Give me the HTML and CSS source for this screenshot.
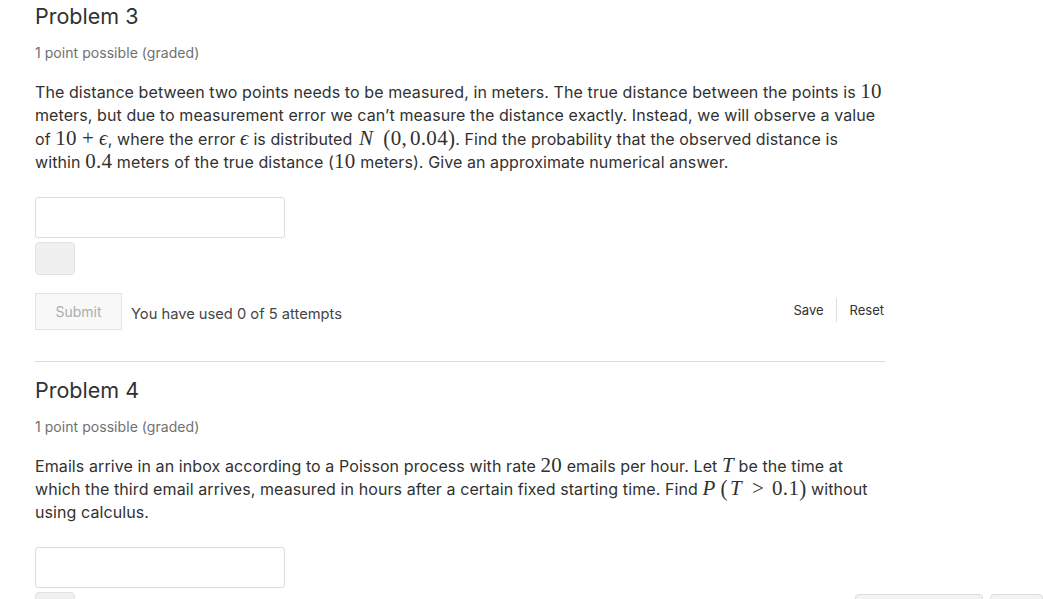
FILE: index.html
```html
<!DOCTYPE html>
<html lang="en">
<head>
<meta charset="utf-8">
<title>Problems</title>
<link rel="stylesheet" href="styles.css">
</head>
<body>
<main class="page">
  <section class="problem">
    <h3 class="problem-title">Problem 3</h3>
    <div class="problem-meta">1 point possible (graded)</div>
    <p class="prompt">The distance between two points needs to be measured, in meters. The true distance between the points is <span class="m">10</span> meters, but due to measurement error we can’t measure the distance exactly. Instead, we will observe a value of <span class="m">10<span class="op">+</span><span class="mi">ϵ</span></span>, where the error <span class="m"><span class="mi">ϵ</span></span> is distributed <span class="m"><span class="cal">N</span><span class="paren">(</span>0,<span class="thin"></span>0.04<span class="paren">)</span></span>. Find the probability that the observed distance is within <span class="m">0.4</span> meters of the true distance (<span class="m">10</span> meters). Give an approximate numerical answer.</p>
    <div class="answer">
      <input class="answer-input" type="text" aria-label="Answer">
      <div class="status-box"></div>
    </div>
    <div class="actions">
      <button class="btn-submit" type="button">Submit</button>
      <span class="attempts">You have used 0 of 5 attempts</span>
      <div class="side-actions">
        <button class="btn-link" type="button">Save</button>
        <button class="btn-link btn-sep" type="button">Reset</button>
      </div>
    </div>
  </section>
  <hr class="divider">
  <section class="problem">
    <h3 class="problem-title">Problem 4</h3>
    <div class="problem-meta">1 point possible (graded)</div>
    <p class="prompt">Emails arrive in an inbox according to a Poisson process with rate <span class="m">20</span> emails per hour. Let <span class="m"><span class="mi">T</span></span> be the time at which the third email arrives, measured in hours after a certain fixed starting time. Find <span class="m"><span class="mi">P</span><span class="paren pl">(</span><span class="mi">T</span><span class="op op-rel">&gt;</span>0.1<span class="paren">)</span></span> without using calculus.</p>
    <div class="answer">
      <input class="answer-input" type="text" aria-label="Answer">
      <div class="status-box"></div>
    </div>
  </section>
</main>
<div class="bottom-nav">
  <button class="nav-btn nav-wide" type="button"></button>
  <button class="nav-btn" type="button"></button>
</div>
</body>
</html>
```
FILE: styles.css
```css
html, body {
  margin: 0;
  padding: 0;
  background: #fff;
}
body {
  font-family: Inter, "Noto Sans", sans-serif;
  color: #313131;
  overflow: hidden;
}
.page {
  width: 850px;
  padding-left: 35px;
}
.problem {
  padding-top: 3px;
}
.problem-title {
  margin: 0;
  font-size: 21.5px;
  font-weight: 400;
  line-height: 26px;
  color: #313131;
}
.problem-meta {
  margin-top: 14px;
  font-size: 14px;
  letter-spacing: 0.05px;
  line-height: 20px;
  color: #707070;
}
.prompt {
  margin: 18px 0 0;
  font-size: 16px;
  letter-spacing: 0.09px;
  line-height: 23.4px;
  color: #313131;
}
.m {
  font-family: "Liberation Serif", "DejaVu Serif", serif;
  font-size: 21px;
  line-height: 1;
  letter-spacing: 0.3px;
  white-space: nowrap;
}
.mi {
  font-style: italic;
}
.op {
  margin: 0 5px;
}
.op-rel {
  margin: 0 8px 0 10px;
}
.thin {
  display: inline-block;
  width: 3px;
}
.cal {
  font-style: italic;
  margin-right: 10px;
  margin-left: 2px;
}
.paren {
  display: inline-block;
  transform: scaleY(1.12);
}
.pl {
  margin-left: 5px;
  margin-right: 2px;
}
.answer {
  margin-top: 22px;
  display: flex;
  flex-direction: column;
  align-items: flex-start;
  gap: 4px;
}
.answer-input {
  box-sizing: border-box;
  width: 250px;
  height: 41px;
  margin: 0;
  border: 1px solid #dcdcdc;
  border-radius: 3px;
  background: #fff;
}
.status-box {
  box-sizing: border-box;
  width: 40px;
  height: 33px;
  border: 1px solid #e2e2e2;
  border-radius: 4px;
  background: #f0f0f0;
}
.actions {
  margin-top: 18px;
  display: flex;
  align-items: center;
}
.btn-submit {
  box-sizing: border-box;
  width: 87px;
  height: 37px;
  border: 1px solid #e3e3e3;
  border-radius: 0;
  background: #f8f8f8;
  color: #adadad;
  font-family: Inter, sans-serif;
  font-size: 14px;
  padding: 0;
}
.attempts {
  margin-left: 9px;
  margin-top: 6px;
  font-size: 14.7px;
  color: #454545;
}
.side-actions {
  margin-left: auto;
  display: flex;
  align-items: center;
  margin-top: -3px;
}
.btn-link {
  border: 0;
  background: none;
  padding: 0 12px;
  font-family: Inter, sans-serif;
  font-size: 13px;
  color: #313131;
  line-height: 24px;
}
.btn-link:last-child {
  padding-right: 1px;
}
.btn-sep {
  border-left: 1px solid #dddddd;
  padding-left: 13px;
}
.divider {
  margin: 31px 0 0;
  border: 0;
  border-top: 1px solid #dddddd;
  height: 0;
}
.problem + .divider + .problem {
  padding-top: 15px;
}
.bottom-nav {
  position: fixed;
  top: 594px;
  left: 855px;
  display: flex;
  gap: 7px;
}
.nav-btn {
  box-sizing: border-box;
  width: 53px;
  height: 36px;
  border: 1px solid #dcdcdc;
  border-radius: 4px;
  background: #f3f3f3;
  padding: 0;
}
.nav-wide {
  width: 128px;
}
```
